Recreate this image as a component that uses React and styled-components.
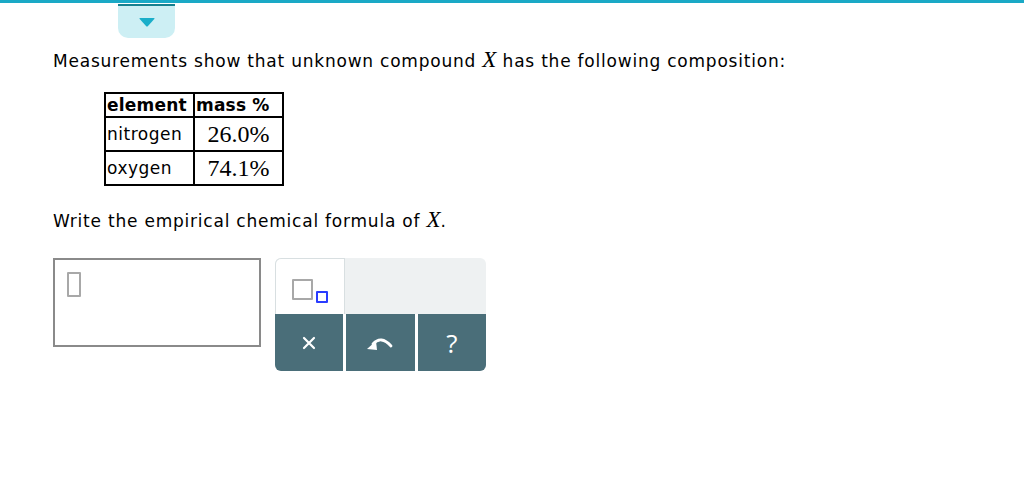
import styled, { createGlobalStyle } from "styled-components";

const Global = createGlobalStyle`
  body {
    margin: 0;
    background: #fff;
    font-family: "DejaVu Sans", Verdana, sans-serif;
    color: #000;
  }
`;

const Page = styled.div`
  width: 1024px;
  height: 499px;
  border-top: 3px solid #1aa9c6;
  box-sizing: border-box;
`;

const Tab = styled.div`
  margin-left: 118px;
  margin-top: 1px;
  width: 57px;
  height: 34px;
  box-sizing: border-box;
  background: #cdeff4;
  border-top: 2px solid #16808f;
  border-radius: 0 0 10px 10px;
  display: flex;
  align-items: center;
  justify-content: center;
`;

const Content = styled.div`
  padding-left: 53px;
`;

const Prompt = styled.p`
  margin: 0;
  font-size: 17px;
  letter-spacing: 0.78px;
  line-height: 20px;
  margin-top: ${(p) => p.$top}px;
`;

const Var = styled.span`
  font-family: "Liberation Serif", "Times New Roman", serif;
  font-style: italic;
  font-size: 23px;
  letter-spacing: 0;
`;

const Table = styled.table`
  margin: 21px 0 0 51px;
  border: 1px solid #000;
  border-spacing: 0;
`;

const Cell = styled.td`
  border: 1px solid #000;
  padding: 0 1px;
  width: ${(p) => p.$w}px;
  height: ${(p) => (p.$head ? 22 : 32)}px;
  font-size: 17px;
  letter-spacing: ${(p) => (p.$head ? 0.2 : 0.5)}px;
  font-weight: ${(p) => (p.$head ? "bold" : "normal")};
  text-align: ${(p) => (p.$num ? "center" : "left")};
  ${(p) =>
    p.$num &&
    `font-family: "Liberation Serif", "Times New Roman", serif; font-size: 24px; letter-spacing: 0;`}
`;

const AnswerRow = styled.div`
  display: flex;
  align-items: flex-start;
  gap: 14px;
  margin-top: 27px;
`;

const InputBox = styled.div`
  width: 208px;
  height: 89px;
  box-sizing: border-box;
  border: 2px solid #8a8a8a;
  padding: 12px 0 0 12px;
`;

const Slot = styled.div`
  width: ${(p) => p.$w || 14}px;
  height: ${(p) => p.$h || 25}px;
  box-sizing: border-box;
  border: 2px solid ${(p) => p.$c || "#a8a8a8"};
  border-radius: 1px;
`;

const Palette = styled.div`
  width: 211px;
  display: flex;
  flex-direction: column;
`;

const TopRow = styled.div`
  height: 56px;
  background: #eef1f2;
  border-radius: 6px 6px 0 0;
  display: flex;
`;

const TemplateCell = styled.div`
  width: 70px;
  background: #fff;
  border: 1px solid #d8dfe1;
  border-bottom: none;
  box-sizing: border-box;
  border-radius: 6px 0 0 0;
  display: flex;
  align-items: center;
  justify-content: center;
  gap: 3px;
  padding-top: 6px;
`;

const Sub = styled.div`
  margin-top: 14px;
`;

const ButtonRow = styled.div`
  display: flex;
  gap: 3px;
  background: #fff;
`;

const Button = styled.div`
  flex: 1;
  height: 57px;
  background: #4a6e79;
  color: #fff;
  display: flex;
  align-items: center;
  justify-content: center;
  font-family: "Open Sans", "DejaVu Sans", sans-serif;
  font-size: 26px;
  border-radius: ${(p) => p.$radius || "0"};
`;

export default function App() {
  return (
    <>
      <Global />
      <Page>
        <Tab>
          <svg width="18" height="12" viewBox="0 0 18 12">
            <path d="M2 2 L16 2 Q17 2 16.3 3 L10 10 Q9 11 8 10 L1.7 3 Q1 2 2 2 Z" fill="#1aaec9" />
          </svg>
        </Tab>
        <Content>
          <Prompt $top={12}>
            Measurements show that unknown compound <Var>X</Var> has the following composition:
          </Prompt>
          <Table>
            <tbody>
              <tr>
                <Cell $head $w={85}>element</Cell>
                <Cell $head $w={85}>mass %</Cell>
              </tr>
              <tr>
                <Cell>nitrogen</Cell>
                <Cell $num>26.0%</Cell>
              </tr>
              <tr>
                <Cell>oxygen</Cell>
                <Cell $num>74.1%</Cell>
              </tr>
            </tbody>
          </Table>
          <Prompt $top={24}>
            Write the empirical chemical formula of <Var>X</Var>.
          </Prompt>
          <AnswerRow>
            <InputBox>
              <Slot />
            </InputBox>
            <Palette>
              <TopRow>
                <TemplateCell>
                  <Slot $w={21} $h={21} />
                  <Sub>
                    <Slot $c="#2a3dff" $w={12} $h={12} />
                  </Sub>
                </TemplateCell>
              </TopRow>
              <ButtonRow>
                <Button $radius="0 0 0 6px">
                  <svg width="14" height="14" viewBox="0 0 14 14">
                    <path d="M2 2 L12 12 M12 2 L2 12" stroke="#fff" strokeWidth="2.2" strokeLinecap="round" />
                  </svg>
                </Button>
                <Button>
                  <svg width="30" height="16" viewBox="0 0 30 16">
                    <path d="M8 9 Q16 0 26 11" stroke="#fff" strokeWidth="2.8" fill="none" strokeLinecap="round" />
                    <path d="M2 14 L11 6 L12 15 Z" fill="#fff" />
                  </svg>
                </Button>
                <Button $radius="0 0 6px 0">?</Button>
              </ButtonRow>
            </Palette>
          </AnswerRow>
        </Content>
      </Page>
    </>
  );
}
